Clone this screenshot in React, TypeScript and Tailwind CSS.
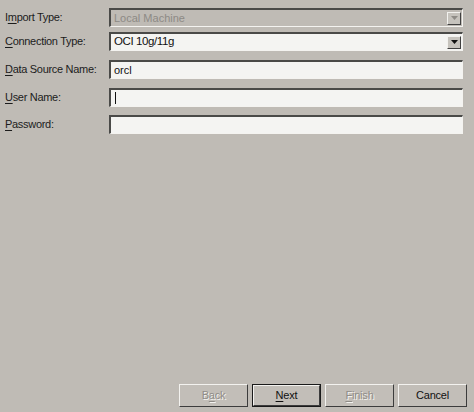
import React from "react";

const font = { fontFamily: "'Liberation Sans', Arial, sans-serif" };

function Label({ pre = "", key1, post }: { pre?: string; key1: string; post: string }) {
  return (
    <span className="text-[11px] text-[#1c1c1c] leading-none whitespace-nowrap tracking-[-0.3px]">
      {pre}
      <span className="underline underline-offset-2">{key1}</span>
      {post}
    </span>
  );
}

// Sunken classic text box
function Field({
  children,
  disabled,
  combo,
}: {
  children?: React.ReactNode;
  disabled?: boolean;
  combo?: boolean;
}) {
  return (
    <div className="h-[19px] border-t-2 border-l-2 border-t-[#4a4a48] border-l-[#4a4a48] border-b border-r border-b-[#f4f3f0] border-r-[#f4f3f0]">
      <div
        className={`h-full flex items-center pl-[3px] pr-[1px] ${
          disabled ? "bg-[#bfbbb5]" : "bg-[#f4f4f2]"
        }`}
      >
        <div className="flex-1 min-w-0 flex items-center">{children}</div>
        {combo && (
          <div className="w-[14px] h-[13px] bg-[#c6c3bd] border-t border-l border-t-[#f2f1ee] border-l-[#f2f1ee] border-b border-r border-b-[#404040] border-r-[#404040] flex items-center justify-center">
            <svg width="7" height="4" viewBox="0 0 7 4">
              <path d="M0 0 H7 L3.5 4 Z" fill={disabled ? "#8e8b86" : "#111"} />
            </svg>
          </div>
        )}
      </div>
    </div>
  );
}

function Button({
  label,
  idx,
  disabled,
  isDefault,
}: {
  label: string;
  idx: number;
  disabled?: boolean;
  isDefault?: boolean;
}) {
  const hasKey = idx >= 0;
  const a = hasKey ? label.slice(0, idx) : label;
  const k = hasKey ? label[idx] : "";
  const b = hasKey ? label.slice(idx + 1) : "";
  return (
    <div
      className={`w-[69px] h-[23px] ${
        isDefault ? "border border-[#1a1a1a]" : ""
      }`}
    >
      <div className="h-full border-t border-l border-t-[#f3f2ef] border-l-[#f3f2ef] border-b border-r border-b-[#3c3c3c] border-r-[#3c3c3c] bg-[#c2beb8] flex items-center justify-center">
        <span
          className={`text-[11px] leading-none whitespace-nowrap tracking-[-0.2px] ${
            disabled
              ? "text-[#8f8c87] [text-shadow:1px_1px_0_#f4f3f0]"
              : "text-[#111]"
          }`}
        >
          {a}
          {k && <span className="underline underline-offset-2">{k}</span>}
          {b}
        </span>
      </div>
    </div>
  );
}

export default function App() {
  return (
    <div
      className="w-[474px] h-[412px] bg-[#bfbbb5] flex flex-col overflow-hidden"
      style={font}
    >
      <div className="grid grid-cols-[104px_1fr] pl-[5px] pr-[11px] pt-[8px] items-center">
        <Label pre="I" key1="m" post="port Type:" />
        <Field disabled combo>
          <span className="text-[11px] text-[#8d8a85] leading-none">Local Machine</span>
        </Field>

        <div className="col-span-2 h-[5px]" />
        <Label key1="C" post="onnection Type:" />
        <Field combo>
          <span className="text-[11.5px] text-[#111] leading-none tracking-[-0.4px]">OCI 10g/11g</span>
        </Field>

        <div className="col-span-2 h-[9px]" />
        <Label key1="D" post="ata Source Name:" />
        <Field>
          <span className="text-[11px] text-[#111] leading-none">orcl</span>
        </Field>

        <div className="col-span-2 h-[9px]" />
        <Label key1="U" post="ser Name:" />
        <Field>
          <span className="w-px h-[12px] bg-[#111] ml-px" />
        </Field>

        <div className="col-span-2 h-[8px]" />
        <Label key1="P" post="assword:" />
        <Field />
      </div>

      <div className="flex-1" />

      <div className="flex justify-end gap-[4px] pr-[7px] pb-[5px]">
        <Button label="Back" idx={1} disabled />
        <Button label="Next" idx={0} isDefault />
        <Button label="Finish" idx={0} disabled />
        <Button label="Cancel" idx={-1} />
      </div>
    </div>
  );
}
